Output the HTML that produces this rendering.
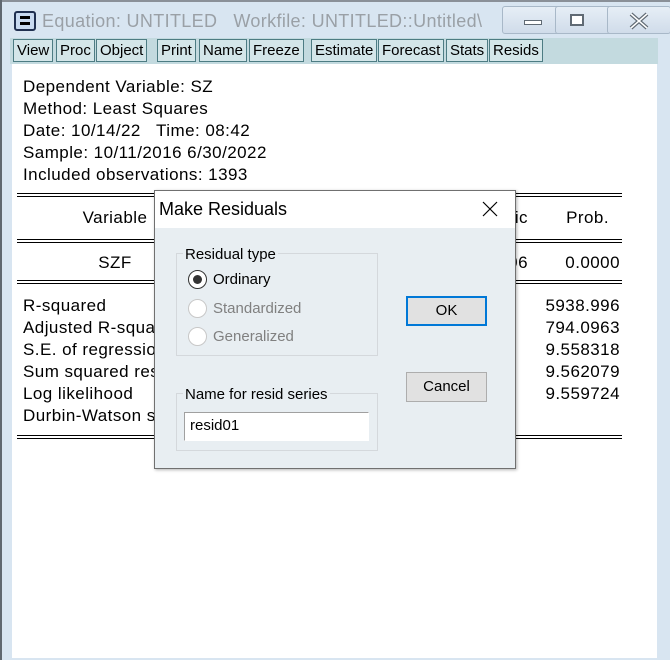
<!DOCTYPE html>
<html><head><style>
*{margin:0;padding:0;box-sizing:border-box}
body{width:670px;height:660px;position:relative;background:#d8e5f1;font-family:"Liberation Sans",Arial,sans-serif;overflow:hidden}
.abs{position:absolute}
.t{position:absolute;font-size:17px;letter-spacing:0.45px;color:#000;white-space:nowrap;line-height:18px}
.r{position:absolute;font-size:17px;letter-spacing:0.45px;color:#000;white-space:nowrap;line-height:18px;text-align:right}
.dl{position:absolute;left:17px;width:605px;height:4px;border-top:1px solid #000;border-bottom:1px solid #000}
.tb{position:absolute;top:39px;height:23px;border:1px solid #4d7c83;background:#d4e6e9;font-size:15px;line-height:21px;padding:0 3px;color:#000}
.wb{position:absolute;top:6px;width:64px;height:28px;border:1px solid #a8b8c8;border-radius:3px;background:linear-gradient(#e6eef6,#d0dcea)}
.d{font-family:"Liberation Sans","DejaVu Sans",sans-serif;letter-spacing:0}
</style></head><body>
<div class="abs" style="left:0;top:0;width:670px;height:2px;background:#8a9098"></div>
<div class="abs" style="left:0;top:0;width:2px;height:660px;background:#606870"></div>
<div class="abs" style="left:14px;top:11px;width:22px;height:20px;border:2px solid #203050;border-radius:3px;background:#c8daf0"></div>
<div class="abs" style="left:20px;top:16px;width:10px;height:3px;background:#000"></div>
<div class="abs" style="left:20px;top:22px;width:10px;height:3px;background:#000"></div>
<div class="t" style="left:42px;top:11px;font-size:18px;letter-spacing:0.35px;color:#9aa0a6;line-height:20px">Equation: UNTITLED &nbsp; Workfile: UNTITLED::Untitled\</div>
<div class="wb" style="left:502px"><div class="abs" style="left:21px;top:13px;width:18px;height:5px;border:1px solid #606a74;background:#fff"></div></div>
<div class="wb" style="left:555px"><div class="abs" style="left:14px;top:7px;width:14px;height:12px;border:2px solid #606a74;background:#fff"></div></div>
<div class="wb" style="left:607px"><svg class="abs" style="left:20px;top:5px" width="22" height="18"><path d="M3 2L19 16M19 2L3 16" stroke="#606a74" stroke-width="4"/><path d="M3 2L19 16M19 2L3 16" stroke="#fff" stroke-width="1.5"/></svg></div>
<div class="abs" style="left:10px;top:38px;width:648px;height:26px;background:#c3dadf"></div>
<div class="tb" style="left:13px">View</div>
<div class="tb" style="left:56px">Proc</div>
<div class="tb" style="left:96px">Object</div>
<div class="tb" style="left:157px">Print</div>
<div class="tb" style="left:199px">Name</div>
<div class="tb" style="left:249px">Freeze</div>
<div class="tb" style="left:311px">Estimate</div>
<div class="tb" style="left:378px">Forecast</div>
<div class="tb" style="left:446px">Stats</div>
<div class="tb" style="left:489px">Resids</div>
<div class="abs" style="left:12px;top:64px;width:645px;height:594px;background:#fff"></div>
<div class="t" style="left:23px;top:78px">Dependent Variable: SZ</div>
<div class="t" style="left:23px;top:100px">Method: Least Squares</div>
<div class="t" style="left:23px;top:122px">Date: 10/14/22 &nbsp; Time: 08:42</div>
<div class="t" style="left:23px;top:144px">Sample: 10/11/2016 6/30/2022</div>
<div class="t" style="left:23px;top:166px">Included observations: 1393</div>
<div class="dl" style="top:193px"></div>
<div class="t" style="left:65px;width:100px;text-align:center;top:209px">Variable</div>
<div class="r" style="right:142px;top:209px">ic</div>
<div class="r" style="right:61px;top:209px">Prob.</div>
<div class="dl" style="top:239px"></div>
<div class="t" style="left:65px;width:100px;text-align:center;top:254px">SZF</div>
<div class="r" style="right:142px;top:254px">96</div>
<div class="r" style="right:50px;top:254px">0.0000</div>
<div class="dl" style="top:280px"></div>
<div class="t" style="left:23px;top:297px">R-squared</div>
<div class="t" style="left:23px;top:319px">Adjusted R-squa</div>
<div class="t" style="left:23px;top:341px">S.E. of regressio</div>
<div class="t" style="left:23px;top:363px">Sum squared res</div>
<div class="t" style="left:23px;top:385px">Log likelihood</div>
<div class="t" style="left:23px;top:407px">Durbin-Watson s</div>
<div class="r" style="right:50px;top:297px">5938.996</div>
<div class="r" style="right:50px;top:319px">794.0963</div>
<div class="r" style="right:50px;top:341px">9.558318</div>
<div class="r" style="right:50px;top:363px">9.562079</div>
<div class="r" style="right:50px;top:385px">9.559724</div>
<div class="dl" style="top:435px"></div>
<!-- dialog -->
<div class="abs d" style="left:154px;top:190px;width:362px;height:279px;border:1px solid #707070;background:#e8eef2;box-shadow:1px 1px 3px rgba(0,0,0,.3)">
 <div class="abs" style="left:0;top:0;width:360px;height:37px;background:#fff"></div>
 <div class="t d" style="left:4px;top:9px;font-size:18px">Make Residuals</div>
 <svg class="abs" style="left:327px;top:10px" width="16" height="16"><path d="M1 1L15 15M15 1L1 15" stroke="#000" stroke-width="1.2"/></svg>
 <div class="abs" style="left:21px;top:62px;width:202px;height:103px;border:1px solid #d4d8dc"></div>
 <div class="t d" style="left:28px;top:55px;background:#e8eef2;padding:0 2px;font-size:15px">Residual type</div>
 <div class="abs" style="left:33px;top:79px;width:19px;height:19px;border:1px solid #333;border-radius:50%;background:#fff"></div>
 <div class="abs" style="left:38px;top:84px;width:9px;height:9px;border-radius:50%;background:#333"></div>
 <div class="t d" style="left:58px;top:80px;font-size:15px">Ordinary</div>
 <div class="abs" style="left:33px;top:108px;width:19px;height:19px;border:1px solid #c8c8c8;border-radius:50%;background:#fff"></div>
 <div class="t d" style="left:58px;top:109px;font-size:15px;color:#808080">Standardized</div>
 <div class="abs" style="left:33px;top:136px;width:19px;height:19px;border:1px solid #c8c8c8;border-radius:50%;background:#fff"></div>
 <div class="t d" style="left:58px;top:137px;font-size:15px;color:#808080">Generalized</div>
 <div class="abs" style="left:21px;top:202px;width:202px;height:58px;border:1px solid #d4d8dc"></div>
 <div class="t d" style="left:28px;top:195px;background:#e8eef2;padding:0 2px;font-size:15px">Name for resid series</div>
 <div class="abs" style="left:29px;top:221px;width:185px;height:29px;border:1px solid #a0a0a0;border-right-color:#fff;border-bottom-color:#fff;background:#fff"></div>
 <div class="t d" style="left:35px;top:226px;font-size:15px">resid01</div>
 <div class="abs" style="left:251px;top:105px;width:81px;height:30px;border:2px solid #0078d7;background:#e1e1e1;text-align:center;font-size:15px;line-height:26px">OK</div>
 <div class="abs" style="left:251px;top:181px;width:81px;height:30px;border:1px solid #adadad;background:#e1e1e1;text-align:center;font-size:15px;line-height:28px">Cancel</div>
</div>
</body></html>
